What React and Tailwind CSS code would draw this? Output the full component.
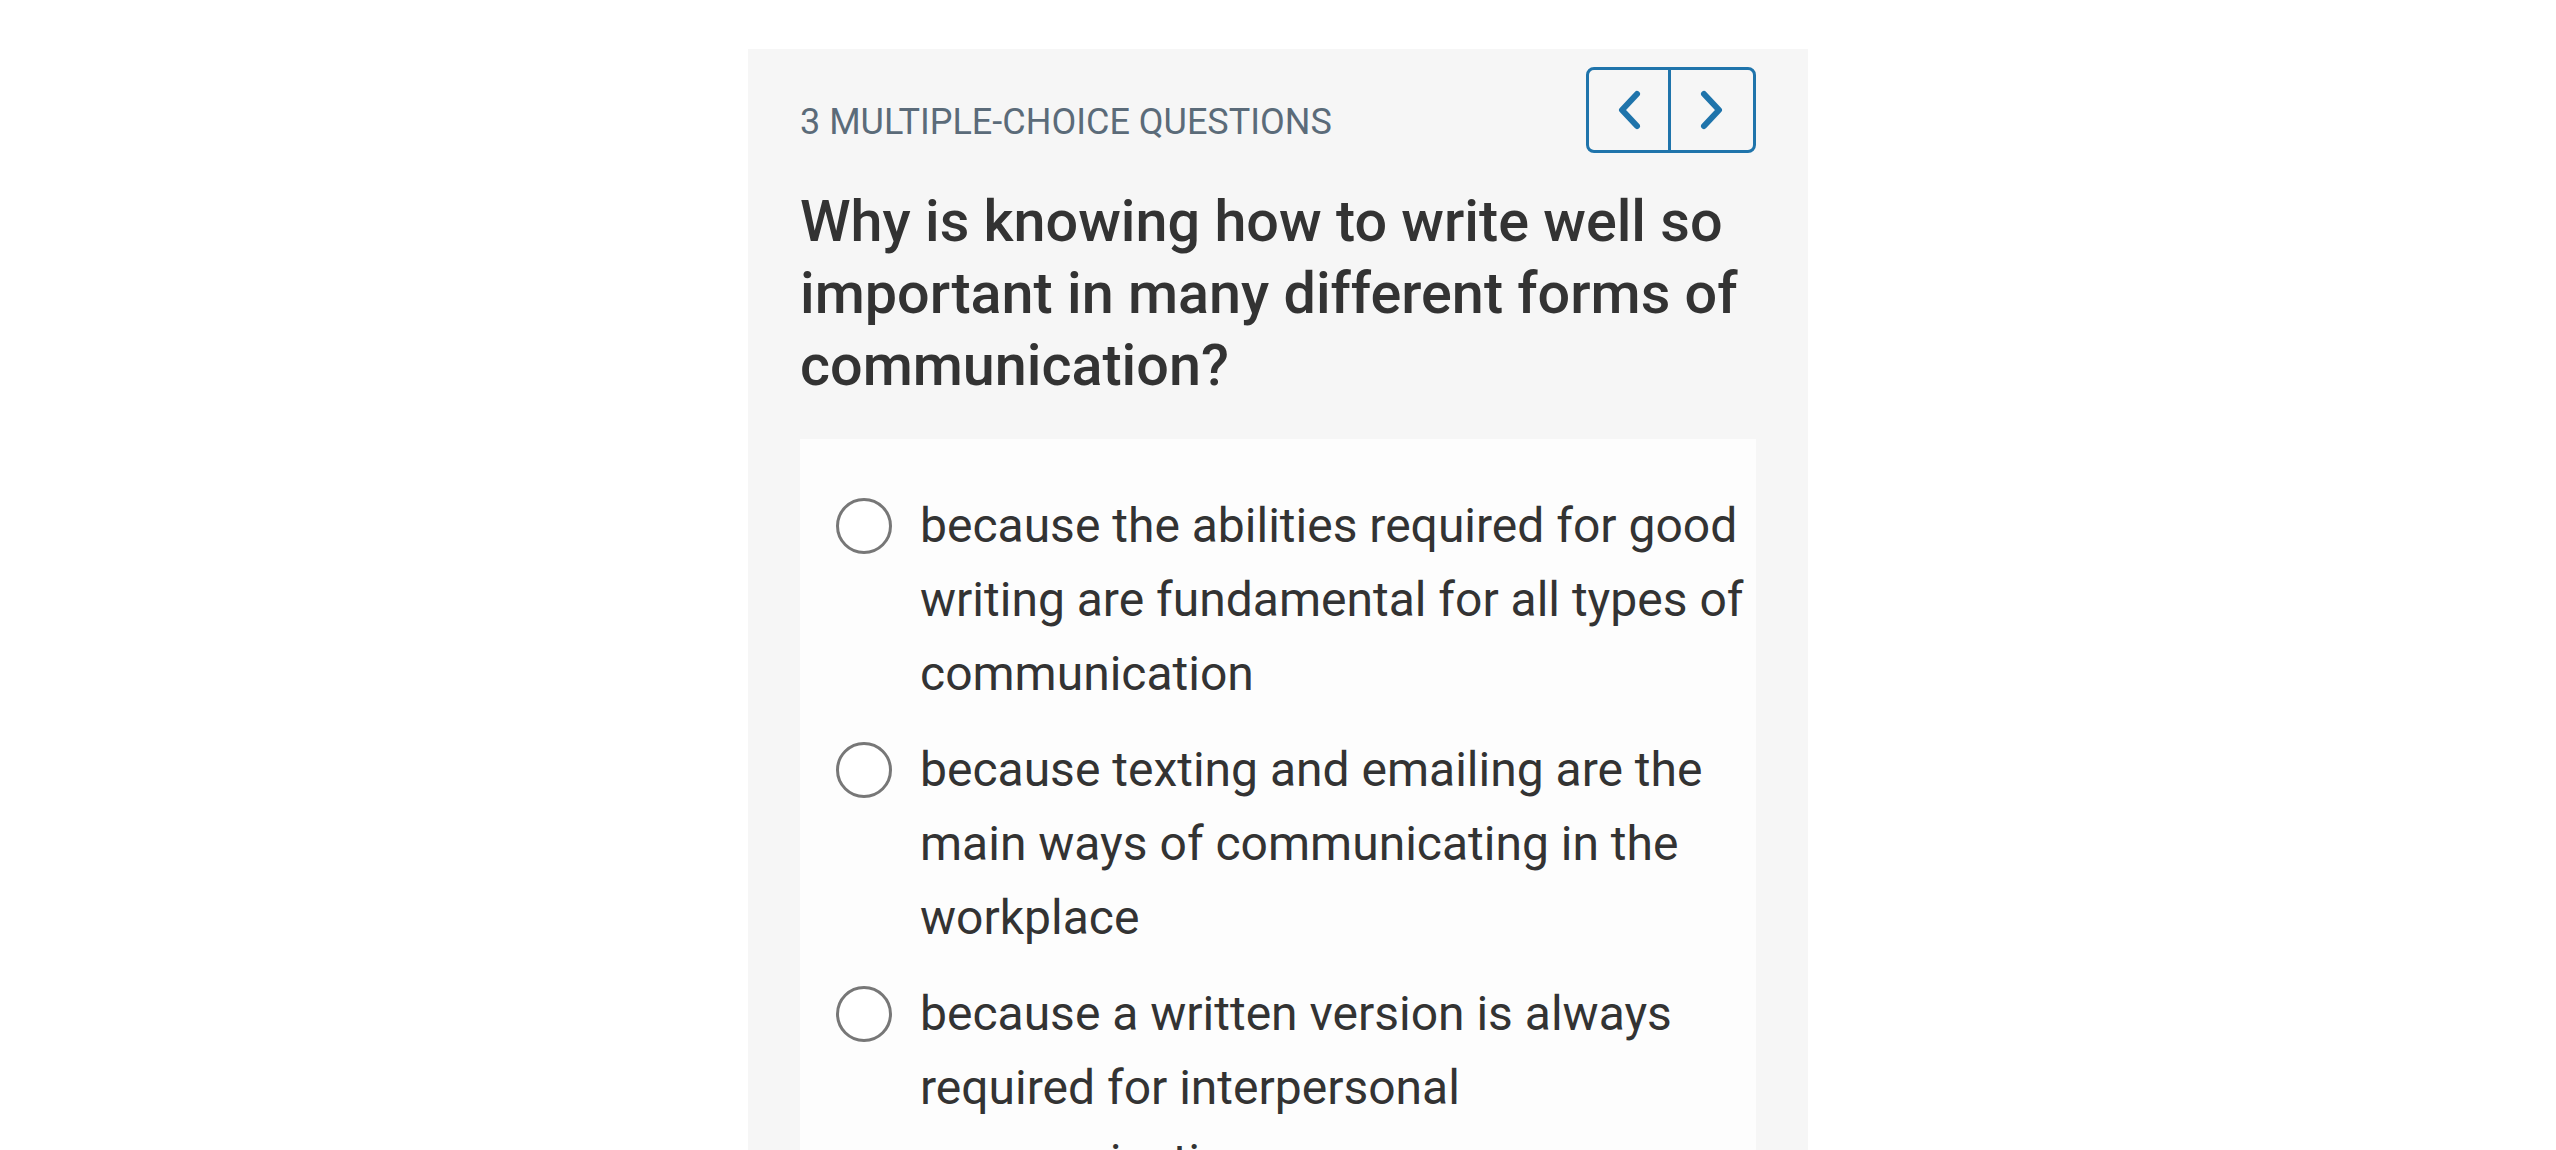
const options = [
  "because the abilities required for good writing are fundamental for all types of communication",
  "because texting and emailing are the main ways of communicating in the workplace",
  "because a written version is always required for interpersonal communication",
];

const Chevron = ({ dir }) => (
  <svg width="30" height="44" viewBox="0 0 30 44" fill="none">
    <path
      d={dir === "left" ? "M23 6 L8 22 L23 38" : "M7 6 L22 22 L7 38"}
      stroke="#1f74ab"
      strokeWidth="6"
      strokeLinecap="round"
      strokeLinejoin="round"
    />
  </svg>
);

export default function App() {
  return (
    <div className="w-full h-[1150px] bg-white overflow-hidden font-['Roboto',sans-serif]">
      <div className="mx-auto mt-[49px] w-[1060px] bg-[#f6f6f6] px-[52px] pt-[18px] pb-10">
        <div className="flex items-center justify-between">
          <p className="mt-6 text-[36px] text-[#5b6b79]">
            3 MULTIPLE-CHOICE QUESTIONS
          </p>
          <div className="flex h-[86px] border-[3px] border-[#1f74ab] rounded-lg overflow-hidden">
            <button className="w-[82px] flex items-center justify-center border-r-[3px] border-[#1f74ab]">
              <Chevron dir="left" />
            </button>
            <button className="w-[82px] flex items-center justify-center">
              <Chevron dir="right" />
            </button>
          </div>
        </div>
        <h1 className="mt-[33px] text-[57.5px] leading-[72px] font-medium text-[#333333]">
          Why is knowing how to write well so important in many different forms of communication?
        </h1>
        <div className="mt-[37px] bg-[#fdfdfd] pl-9 pr-2 pt-[50px] pb-10 flex flex-col gap-[22px]">
          {options.map((o, i) => (
            <label key={i} className="flex items-start gap-[28px]">
              <span className="mt-[9px] shrink-0 w-[56px] h-[56px] rounded-full border-[3px] border-[#777777] bg-white" />
              <span className="text-[48px] leading-[74px] text-[#333333]">{o}</span>
            </label>
          ))}
        </div>
      </div>
    </div>
  );
}
